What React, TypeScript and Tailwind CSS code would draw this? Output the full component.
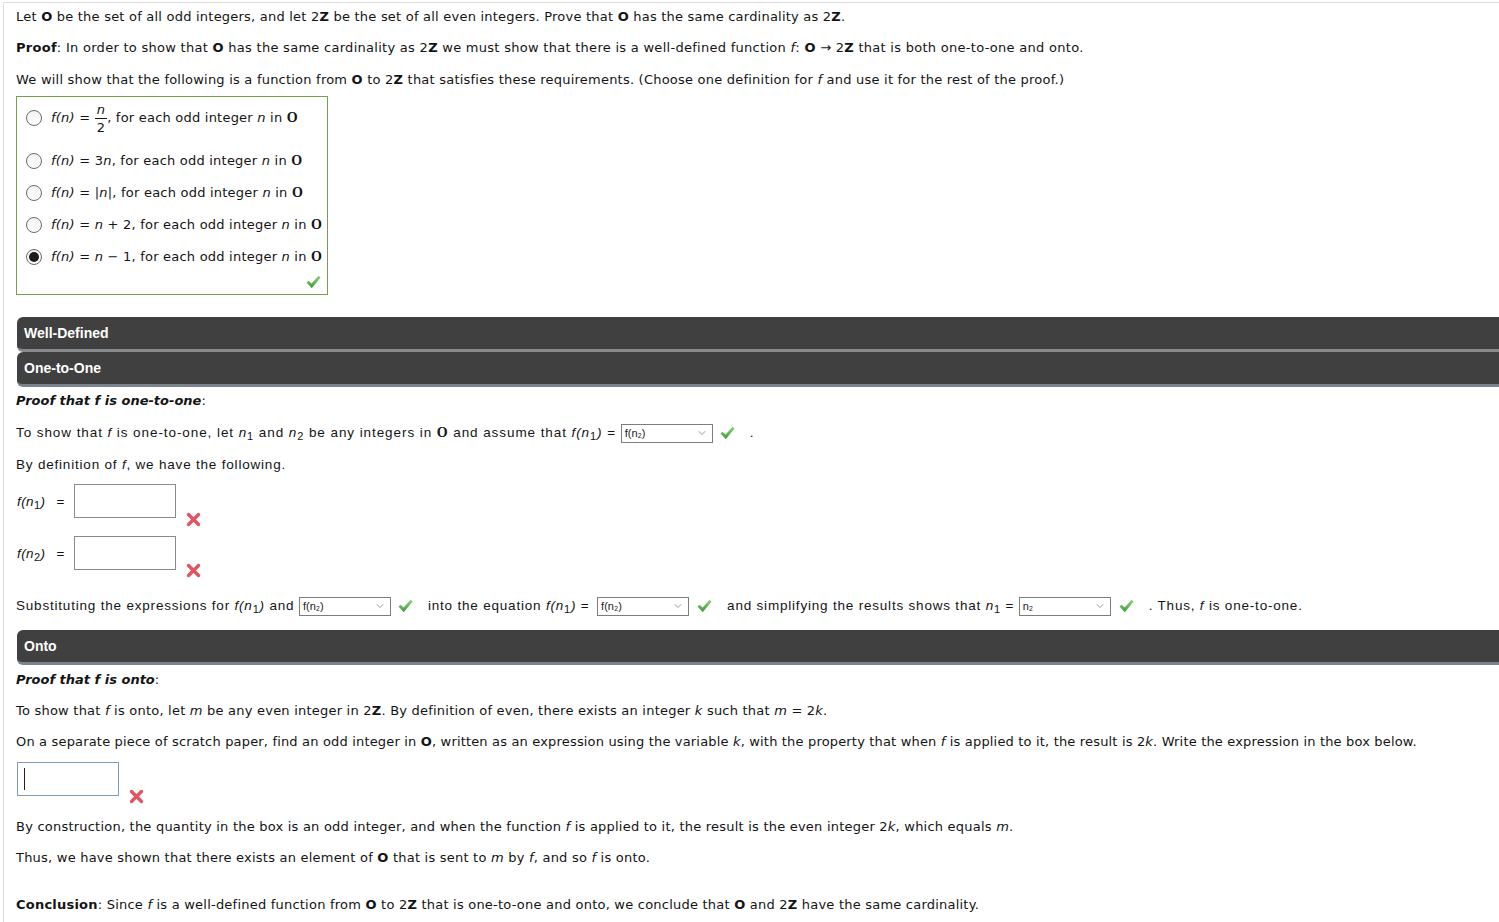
import React from 'react';
import { ChevronDown } from 'lucide-react';

const sans = "font-['DejaVu_Sans',Verdana,sans-serif]";
const narrow = "font-['Liberation_Sans',Tahoma,Arial,sans-serif] text-[13.5px] tracking-[0.8px]";
const serifO = "font-['Liberation_Serif',serif] font-bold text-[14px]";

function Sub({ children }: { children: React.ReactNode }) {
  return <sub className="text-[11px] not-italic">{children}</sub>;
}

function Fn({ n }: { n?: string }) {
  return (
    <i>
      f(n{n && <Sub>{n}</Sub>})
    </i>
  );
}

function OSerif() {
  return <b className={serifO}>O</b>;
}

function Check() {
  return (
    <svg width="15" height="14" viewBox="0 0 15 14" className="shrink-0">
      <defs>
        <linearGradient id="chk" x1="0" y1="0" x2="0" y2="1">
          <stop offset="0" stopColor="#8ad673" />
          <stop offset="1" stopColor="#3f9a3a" />
        </linearGradient>
      </defs>
      <path d="M0.5 7.6 L2.6 5.8 L5.6 8.6 L12.6 0.8 L14.6 2.4 L5.8 13.2 Z" fill="url(#chk)" />
    </svg>
  );
}

function Cross() {
  return (
    <svg width="15" height="15" viewBox="0 0 15 15" className="shrink-0">
      <path d="M2.5 2.5 L12.5 12.5 M12.5 2.5 L2.5 12.5" stroke="#e2545f" strokeWidth="3.4" strokeLinecap="round" />
    </svg>
  );
}

function Dropdown({ value }: { value: React.ReactNode }) {
  return (
    <span className="inline-flex h-[19px] w-[92px] shrink-0 items-center justify-between border border-[#7d7d7d] bg-white pl-[3px] pr-[4px]">
      <span className="font-['Liberation_Sans',Arial,sans-serif] text-[11px] leading-none tracking-normal text-[#222]">{value}</span>
      <ChevronDown size={12} strokeWidth={1.2} className="text-[#555]" />
    </span>
  );
}

function Radio({ checked }: { checked?: boolean }) {
  return (
    <span className="flex h-[16px] w-[16px] shrink-0 items-center justify-center rounded-full border border-[#6a6a6a] bg-gradient-to-b from-[#f2f2f2] to-white">
      {checked && <span className="h-[10px] w-[10px] rounded-full bg-[#1c1c1c]" />}
    </span>
  );
}

function Option({ checked, children, className = '' }: { checked?: boolean; children: React.ReactNode; className?: string }) {
  return (
    <div className={`flex h-[32px] items-center gap-[9px] ${className}`}>
      <Radio checked={checked} />
      <span className="flex items-center whitespace-nowrap">{children}</span>
    </div>
  );
}

function Bar({ title, edge }: { title: string; edge: string }) {
  return (
    <div className={`ml-[1px] flex h-[35px] items-center rounded-l-[6px] bg-[#404040] pl-[7px] font-['Liberation_Sans',Arial,sans-serif] text-[14px] font-bold tracking-normal text-white ${edge}`}>
      {title}
    </div>
  );
}

function AnswerBox({ focused }: { focused?: boolean }) {
  return (
    <div className={`flex h-[34px] w-[102px] shrink-0 items-center border bg-white pl-[6px] ${focused ? 'border-[#7f9db9]' : 'border-[#8a8a8a]'}`}>
      {focused && <span className="h-[22px] w-px bg-[#222]" />}
    </div>
  );
}

function ValueRow({ n, crossTop }: { n: string; crossTop: string }) {
  return (
    <div className={`flex items-start ${narrow}`}>
      <span className="mt-[10px] flex w-[58px] pl-[1px] tracking-[0.4px]">
        <Fn n={n} />
        <span className="ml-[11px]">=</span>
      </span>
      <AnswerBox />
      <span className={`ml-[10px] ${crossTop}`}><Cross /></span>
    </div>
  );
}

export default function App() {
  return (
    <div className={`min-h-screen bg-white pl-[3px] pt-[2px] text-[13px] leading-[16px] tracking-[0.22px] text-[#141414] ${sans}`}>
      <div className="min-h-[920px] border-l border-t border-[#dedede] pl-[12px] pt-[6px]">
        <p>
          Let <b>O</b> be the set of all odd integers, and let 2<b>Z</b> be the set of all even integers. Prove that <b>O</b> has the same cardinality as 2<b>Z</b>.
        </p>
        <p className="mt-[15px] tracking-[0.28px]">
          <b>Proof</b>: In order to show that <b>O</b> has the same cardinality as 2<b>Z</b> we must show that there is a well-defined function <i>f</i>: <b>O</b> → 2<b>Z</b> that is both one-to-one and onto.
        </p>
        <p className="mt-[16px]">
          We will show that the following is a function from <b>O</b> to 2<b>Z</b> that satisfies these requirements. (Choose one definition for <i>f</i> and use it for the rest of the proof.)
        </p>

        {/* definition choices */}
        <div className="mt-[8px] w-[312px] border border-[#75a04f] pb-[5px] pl-[9px] pr-[6px] pt-[5px]">
          <Option>
            <Fn />&nbsp;=&nbsp;
            <span className="inline-flex flex-col items-center text-[13px] leading-[15px]">
              <i className="border-b border-[#141414] px-[2px] pb-[1px]">n</i>
              <span className="pt-[1px]">2</span>
            </span>
            <span>, for each odd integer&nbsp;<i>n</i>&nbsp;in&nbsp;<OSerif /></span>
          </Option>
          <Option className="mt-[11px]">
            <span><Fn /> = 3<i>n</i>, for each odd integer <i>n</i> in <OSerif /></span>
          </Option>
          <Option>
            <span><Fn /> = |<i>n</i>|, for each odd integer <i>n</i> in <OSerif /></span>
          </Option>
          <Option>
            <span><Fn /> = <i>n</i> + 2, for each odd integer <i>n</i> in <OSerif /></span>
          </Option>
          <Option checked>
            <span><Fn /> = <i>n</i> − 1, for each odd integer <i>n</i> in <OSerif /></span>
          </Option>
          <div className="mt-[2px] flex justify-end">
            <Check />
          </div>
        </div>

        <div className="mt-[22px]">
          <Bar title="Well-Defined" edge="border-b-[3px] border-[#878a8c]" />
          <Bar title="One-to-One" edge="border-b-[3px] border-[#78838d]" />
        </div>

        {/* one-to-one */}
        <p className="mt-[6px] tracking-normal">
          <b><i>Proof that f is one-to-one</i></b>:
        </p>
        <div className={`mt-[14px] flex h-[20px] items-center whitespace-nowrap ${narrow}`}>
          <span className="tracking-[0.92px]">
            To show that <i>f</i> is one-to-one, let <i>n</i><Sub>1</Sub> and <i>n</i><Sub>2</Sub> be any integers in <OSerif /> and assume that <Fn n="1" /> =&nbsp;
          </span>
          <Dropdown value="f(n₂)" />
          <span className="ml-[7px]"><Check /></span>
          <span className="ml-[15px]">.</span>
        </div>
        <p className={`mt-[14px] ${narrow}`}>
          By definition of <i>f</i>, we have the following.
        </p>

        <div className="mt-[11px]">
          <ValueRow n="1" crossTop="mt-[28px]" />
        </div>
        <div className="mt-[9px]">
          <ValueRow n="2" crossTop="mt-[27px]" />
        </div>

        <div className={`mt-[18px] flex h-[20px] items-center whitespace-nowrap ${narrow}`}>
          <span>Substituting the expressions for <Fn n="1" /> and&nbsp;</span>
          <Dropdown value="f(n₂)" />
          <span className="ml-[7px]"><Check /></span>
          <span className="ml-[15px]">into the equation <Fn n="1" /> =&nbsp;</span>
          <span className="ml-[3px]"><Dropdown value="f(n₂)" /></span>
          <span className="ml-[8px]"><Check /></span>
          <span className="ml-[15px]">and simplifying the results shows that <i>n</i><Sub>1</Sub> =&nbsp;</span>
          <Dropdown value="n₂" />
          <span className="ml-[8px]"><Check /></span>
          <span className="ml-[15px]">. Thus, <i>f</i> is one-to-one.</span>
        </div>

        <div className="mt-[14px]">
          <Bar title="Onto" edge="border-b-[3px] border-[#78838d]" />
        </div>

        {/* onto */}
        <p className="mt-[7px] tracking-normal">
          <b><i>Proof that f is onto</i></b>:
        </p>
        <p className="mt-[15px]">
          To show that <i>f</i> is onto, let <i>m</i> be any even integer in 2<b>Z</b>. By definition of even, there exists an integer <i>k</i> such that <i>m</i> = 2<i>k</i>.
        </p>
        <p className="mt-[15px] tracking-[0.17px]">
          On a separate piece of scratch paper, find an odd integer in <b>O</b>, written as an expression using the variable <i>k</i>, with the property that when <i>f</i> is applied to it, the result is 2<i>k</i>. Write the expression in the box below.
        </p>
        <div className="ml-[1px] mt-[12px] flex items-start">
          <AnswerBox focused />
          <span className="ml-[10px] mt-[27px]"><Cross /></span>
        </div>
        <p className="mt-[15px]">
          By construction, the quantity in the box is an odd integer, and when the function <i>f</i> is applied to it, the result is the even integer 2<i>k</i>, which equals <i>m</i>.
        </p>
        <p className="mt-[15px]">
          Thus, we have shown that there exists an element of <b>O</b> that is sent to <i>m</i> by <i>f</i>, and so <i>f</i> is onto.
        </p>
        <p className="mt-[31px]">
          <b>Conclusion</b>: Since <i>f</i> is a well-defined function from <b>O</b> to 2<b>Z</b> that is one-to-one and onto, we conclude that <b>O</b> and 2<b>Z</b> have the same cardinality.
        </p>
      </div>
    </div>
  );
}
